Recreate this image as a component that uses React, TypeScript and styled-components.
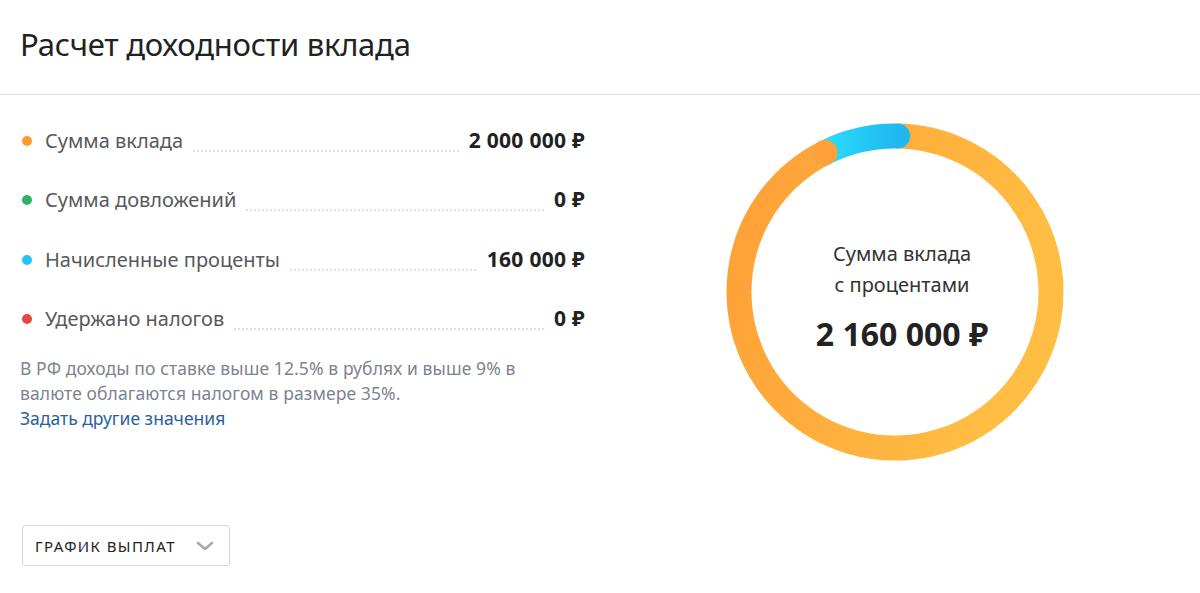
import React from "react";
import styled, { createGlobalStyle } from "styled-components";

const GlobalStyle = createGlobalStyle`
  body {
    margin: 0;
    background: #fff;
    font-family: "Noto Sans", "Open Sans", sans-serif;
  }
`;

type Item = { label: string; value: string; color: string };

const items: Item[] = [
  { label: "Сумма вклада", value: "2 000 000 ₽", color: "#ff9a2e" },
  { label: "Сумма довложений", value: "0 ₽", color: "#2db466" },
  { label: "Начисленные проценты", value: "160 000 ₽", color: "#25c4f2" },
  { label: "Удержано налогов", value: "0 ₽", color: "#e8473f" },
];

// ring geometry
const R = 156;
const C = 170;
const SHARE = 160000 / 2160000;

function point(angle: number) {
  // angle in degrees, 0 = top, clockwise positive
  const a = (angle * Math.PI) / 180;
  return { x: C + R * Math.sin(a), y: C - R * Math.cos(a) };
}

function arc(from: number, to: number) {
  const p1 = point(from);
  const p2 = point(to);
  const large = Math.abs(to - from) > 180 ? 1 : 0;
  return `M ${p1.x} ${p1.y} A ${R} ${R} 0 ${large} 1 ${p2.x} ${p2.y}`;
}

function Ring() {
  const split = -SHARE * 360;
  const cap = point(split);
  return (
    <svg width={340} height={340} viewBox="0 0 340 340">
      <defs>
        <linearGradient id="dep" x1="0" y1="0" x2="1" y2="0.3">
          <stop offset="0" stopColor="#ff9f36" />
          <stop offset="1" stopColor="#ffbe43" />
        </linearGradient>
        <linearGradient id="perc" x1="0" y1="0" x2="1" y2="0">
          <stop offset="0" stopColor="#2bdcfd" />
          <stop offset="1" stopColor="#1fb8ee" />
        </linearGradient>
      </defs>
      <path d={arc(0.5, 360 + split)} fill="none" stroke="url(#dep)" strokeWidth={25} />
      <path d={arc(split, 1)} fill="none" stroke="url(#perc)" strokeWidth={25} strokeLinecap="round" />
      <circle cx={cap.x} cy={cap.y} r={12.5} fill="#ffa038" />
    </svg>
  );
}

function App() {
  return (
    <>
      <GlobalStyle />
      <Header>
        <Title>Расчет доходности вклада</Title>
      </Header>
      <Content>
        <Left>
          <List>
            {items.map((it) => (
              <Row key={it.label}>
                <Dot $color={it.color} />
                <Label>{it.label}</Label>
                <Leader />
                <Value>{it.value}</Value>
              </Row>
            ))}
          </List>
          <Note>
            В РФ доходы по ставке выше 12.5% в рублях и выше 9% в валюте облагаются налогом в
            размере 35%.
          </Note>
          <Link href="#">Задать другие значения</Link>
          <ScheduleButton>
            График выплат
            <svg width="18" height="10" viewBox="0 0 18 10">
              <path d="M2 2 L9 8 L16 2" fill="none" stroke="#a5aab4" strokeWidth="2.6" strokeLinecap="round" strokeLinejoin="round" />
            </svg>
          </ScheduleButton>
        </Left>
        <Right>
          <Chart>
            <Ring />
            <Center>
              <Caption>
                Сумма вклада
                <br />с процентами
              </Caption>
              <Total>2 160 000 ₽</Total>
            </Center>
          </Chart>
        </Right>
      </Content>
    </>
  );
}

const Header = styled.header`
  height: 95px;
  border-bottom: 1px solid #dcdde1;
  display: flex;
  align-items: center;
  padding: 0 20px 6px;
  box-sizing: border-box;
`;

const Title = styled.h1`
  margin: 0;
  font-size: 31px;
  font-weight: 400;
  color: #222;
  letter-spacing: -0.25px;
`;

const Content = styled.main`
  display: grid;
  grid-template-columns: 565px 1fr;
  padding: 0 20px;
`;

const Left = styled.section`
  display: flex;
  flex-direction: column;
  align-items: flex-start;
  padding-top: 22px;
`;

const List = styled.div`
  width: 100%;
  display: flex;
  flex-direction: column;
`;

const Row = styled.div`
  height: 59.3px;
  display: flex;
  align-items: baseline;
  padding-top: 9px;
  box-sizing: border-box;
`;

const Dot = styled.span<{ $color: string }>`
  width: 10px;
  height: 10px;
  border-radius: 50%;
  background: ${(p) => p.$color};
  margin: 0 13px 0 2px;
  flex-shrink: 0;
  transform: translateY(-2px);
`;

const Label = styled.span`
  font-size: 20px;
  color: #58595c;
`;

const Leader = styled.span`
  flex: 1;
  height: 2px;
  margin: 0 10px;
  transform: translateY(4px);
  background-image: linear-gradient(to right, #e0e0e0 50%, transparent 0);
  background-size: 4px 2px;
  background-repeat: repeat-x;
`;

const Value = styled.span`
  font-size: 21px;
  font-weight: 700;
  letter-spacing: 0.3px;
  color: #222;
`;

const Note = styled.p`
  margin: 2px 0 0;
  width: 540px;
  font-size: 17.5px;
  line-height: 25px;
  letter-spacing: 0.1px;
  color: #7d8391;
`;

const Link = styled.a`
  font-size: 17.5px;
  line-height: 25px;
  color: #2a5f9e;
  text-decoration: none;
`;

const ScheduleButton = styled.button`
  margin-top: 94px;
  margin-left: 2px;
  height: 41px;
  padding: 0 15px 0 12px;
  display: flex;
  align-items: center;
  gap: 20px;
  background: #fff;
  border: 1px solid #d4d7dd;
  border-radius: 3px;
  font-family: "Noto Sans", sans-serif;
  font-size: 15px;
  letter-spacing: 1.4px;
  text-transform: uppercase;
  color: #222;
`;

const Right = styled.section`
  display: flex;
  justify-content: center;
  padding-left: 25px;
  padding-top: 27px;
`;

const Chart = styled.div`
  position: relative;
  width: 340px;
  height: 340px;
`;

const Center = styled.div`
  position: absolute;
  inset: 0;
  padding-left: 14px;
  display: flex;
  flex-direction: column;
  align-items: center;
  justify-content: center;
  text-align: center;
`;

const Caption = styled.div`
  font-size: 20px;
  line-height: 31px;
  color: #333;
  margin-top: 8px;
`;

const Total = styled.div`
  margin-top: 12px;
  font-size: 32px;
  font-weight: 700;
  color: #222;
`;

export default App;
